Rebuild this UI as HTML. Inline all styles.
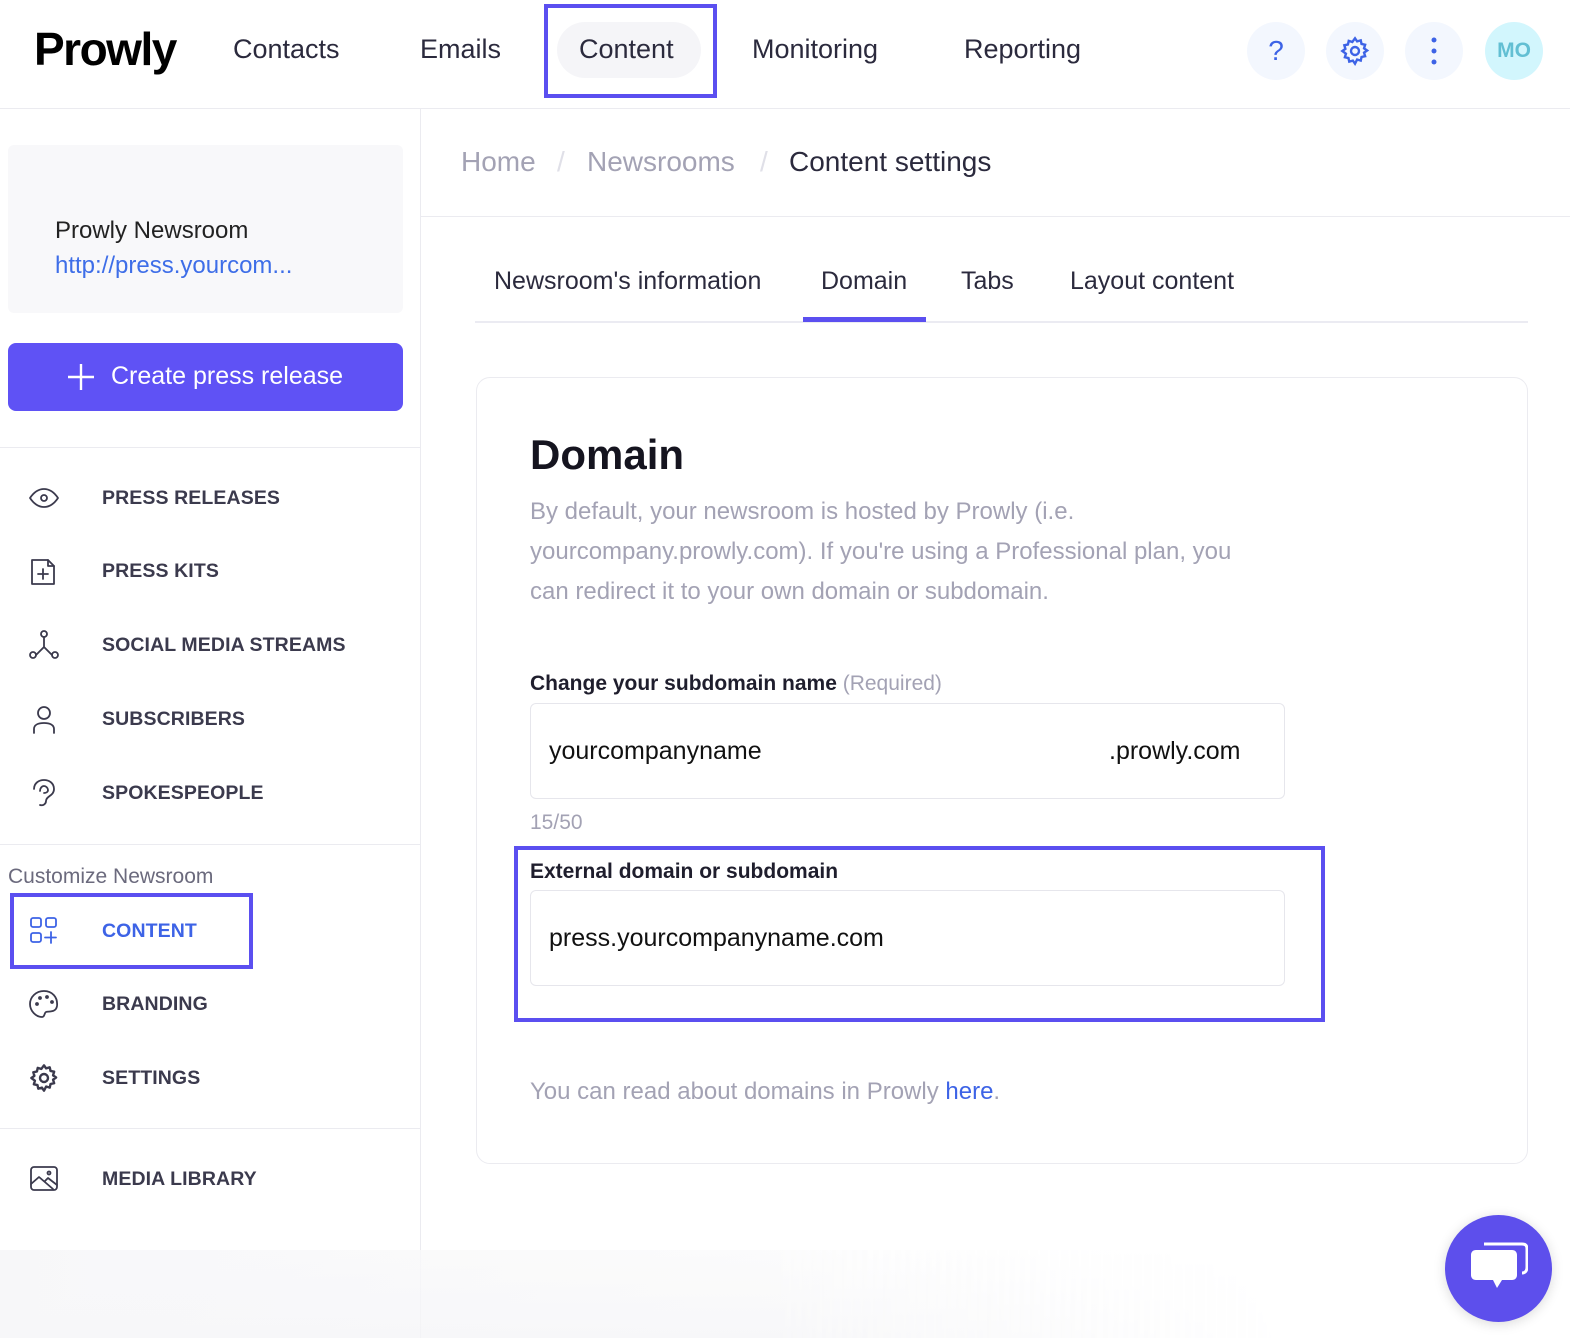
<!DOCTYPE html>
<html><head><meta charset="utf-8"><style>
*{box-sizing:border-box;margin:0;padding:0}
body{width:1570px;height:1338px;position:relative;background:#fff;font-family:"Liberation Sans",sans-serif;color:#2b2a3d;overflow:hidden}
.a{position:absolute;white-space:nowrap}
.nav{font-size:27px;color:#2b2a3d;top:34px}
.circ{position:absolute;top:22px;width:58px;height:58px;border-radius:50%;background:#f3f7fe;display:flex;align-items:center;justify-content:center}
.side{font-size:19.5px;font-weight:bold;color:#3b3a4d;left:102px;letter-spacing:.1px}
.ic{position:absolute;left:28px;width:32px;height:32px}
.ic *{fill:none;stroke:#3b3a4d;stroke-width:1.8;stroke-linecap:round;stroke-linejoin:round}
.hr{position:absolute;left:0;width:420px;height:1px;background:#ebebf0}
</style></head><body>
<div class="a" style="left:34px;top:22px;font-size:46px;font-weight:bold;color:#000;letter-spacing:-1.5px">Prowly</div>
<div class="a nav" style="left:233px">Contacts</div>
<div class="a nav" style="left:420px">Emails</div>
<div class="a" style="left:557px;top:22px;width:144px;height:56px;border-radius:28px;background:#f5f5f8"></div>
<div class="a nav" style="left:579px">Content</div>
<div class="a" style="left:544px;top:4px;width:173px;height:94px;border:4px solid #5b4ff0"></div>
<div class="a nav" style="left:752px">Monitoring</div>
<div class="a nav" style="left:964px">Reporting</div>
<div class="circ" style="left:1247px"><span style="color:#3d63e6;font-size:28px">?</span></div>
<div class="circ" style="left:1326px"><svg width="32" height="32" viewBox="0 0 24 24" fill="none" stroke="#3d63e6" stroke-width="1.8"><circle cx="12" cy="12" r="3"/><path d="M12 2.5l1.6 2.3 2.7-.8.6 2.7 2.7.6-.8 2.7 2.3 1.6-2.3 1.6.8 2.7-2.7.6-.6 2.7-2.7-.8L12 21.5l-1.6-2.3-2.7.8-.6-2.7-2.7-.6.8-2.7L2.5 12l2.3-1.6-.8-2.7 2.7-.6.6-2.7 2.7.8z"/></svg></div>
<div class="circ" style="left:1405px"><svg width="10" height="32" viewBox="0 0 10 32"><circle cx="5" cy="5" r="2.5" fill="#3d63e6"/><circle cx="5" cy="16" r="2.5" fill="#3d63e6"/><circle cx="5" cy="27" r="2.5" fill="#3d63e6"/></svg></div>
<div class="circ" style="left:1485px;background:#d2f6fd"><span style="color:#62bfd3;font-size:21px;font-weight:bold">MO</span></div>
<div class="a" style="left:0;top:108px;width:1570px;height:1px;background:#ebebf0"></div>
<div class="a" style="left:420px;top:108px;width:1px;height:1230px;background:#ebebf0"></div>
<div class="a" style="left:0;top:1250px;width:1300px;height:88px;background:linear-gradient(180deg,rgba(246,246,248,0),rgba(246,246,248,1)), linear-gradient(90deg,#f6f6f8,#fff);opacity:.8;-webkit-mask-image:linear-gradient(90deg,#000 60%,transparent)"></div>

<div class="a" style="left:8px;top:145px;width:395px;height:168px;border-radius:6px;background:#f8f8fa"></div>
<div class="a" style="left:55px;top:217px;font-size:24px;color:#222">Prowly Newsroom</div>
<div class="a" style="left:55px;top:252px;font-size:24px;color:#3e6ee8">http://press.yourcom...</div>
<div class="a" style="left:8px;top:343px;width:395px;height:68px;border-radius:8px;background:#5f52f5"></div>
<svg class="a" style="left:67px;top:363px" width="28" height="28" viewBox="0 0 28 28"><path d="M14 1v26M1 14h26" stroke="#fff" stroke-width="2.4"/></svg>
<div class="a" style="left:111px;top:362px;font-size:25px;color:#fff">Create press release</div>
<div class="hr" style="top:447px"></div>

<svg class="ic" style="top:482px" viewBox="0 0 32 32"><path d="M2 16c4-6 9-9 14-9s10 3 14 9c-4 6-9 9-14 9S6 22 2 16z"/><circle cx="16" cy="16" r="3"/></svg>
<div class="a side" style="top:487px">PRESS RELEASES</div>
<svg class="ic" style="top:556px" viewBox="0 0 32 32"><path d="M4 4h16l6 6v18H4z"/><path d="M20 4v6h6M15 13v10M10 18h10"/></svg>
<div class="a side" style="top:560px">PRESS KITS</div>
<svg class="ic" style="top:629px" viewBox="0 0 32 32"><circle cx="16" cy="5" r="3"/><circle cx="5" cy="26" r="3"/><circle cx="27" cy="26" r="3"/><path d="M16 8v10M8 26l8-8 8 8"/></svg>
<div class="a side" style="top:634px">SOCIAL MEDIA STREAMS</div>
<svg class="ic" style="top:703px" viewBox="0 0 32 32"><circle cx="16" cy="10" r="6"/><path d="M6 30v-4c0-4 4-6 10-6s10 2 10 6v4"/></svg>
<div class="a side" style="top:708px">SUBSCRIBERS</div>
<svg class="ic" style="top:777px" viewBox="0 0 32 32"><path d="M6 12c0-6 5-9 10-9s10 3 10 9c0 7-8 7-8 12 0 3-3 5-6 4M12 14c0-3 2-5 4-5s4 2 4 4-2 3-4 3"/></svg>
<div class="a side" style="top:782px">SPOKESPEOPLE</div>
<div class="hr" style="top:844px"></div>
<div class="a" style="left:8px;top:865px;font-size:21px;color:#6b6a7d">Customize Newsroom</div>
<div class="a" style="left:10px;top:893px;width:243px;height:76px;border:4px solid #5b4ff0"></div>
<svg class="ic" style="top:915px" viewBox="0 0 32 32"><rect x="3" y="3" width="10" height="9" rx="2" style="stroke:#3d63e6"/><rect x="18" y="3" width="10" height="9" rx="2" style="stroke:#3d63e6"/><rect x="3" y="18" width="10" height="9" rx="2" style="stroke:#3d63e6"/><path d="M23 17v11M17 22.5h11" style="stroke:#3d63e6"/></svg>
<div class="a side" style="top:920px;color:#3d63e6">CONTENT</div>
<svg class="ic" style="top:988px" viewBox="0 0 32 32"><path d="M16 3C8 3 2 9 2 16s6 13 12 13c3 0 2-4 4-5s10 1 11-6C30 9 24 3 16 3z"/><circle cx="9" cy="16" r="1"/><circle cx="12" cy="10" r="1"/><circle cx="19" cy="9" r="1"/><circle cx="24" cy="14" r="1"/></svg>
<div class="a side" style="top:993px">BRANDING</div>
<svg class="ic" style="top:1062px" viewBox="0 0 24 24"><circle cx="12" cy="12" r="3"/><path d="M12 2.5l1.6 2.3 2.7-.8.6 2.7 2.7.6-.8 2.7 2.3 1.6-2.3 1.6.8 2.7-2.7.6-.6 2.7-2.7-.8L12 21.5l-1.6-2.3-2.7.8-.6-2.7-2.7-.6.8-2.7L2.5 12l2.3-1.6-.8-2.7 2.7-.6.6-2.7 2.7.8z"/></svg>
<div class="a side" style="top:1067px">SETTINGS</div>
<div class="hr" style="top:1128px"></div>
<svg class="ic" style="top:1163px" viewBox="0 0 32 32"><rect x="3" y="4" width="26" height="23" rx="3"/><path d="M3 21l8-7 14 12M17 18l3-3 9 7"/><circle cx="21" cy="10" r="1.5"/></svg>
<div class="a side" style="top:1168px">MEDIA LIBRARY</div>

<div class="a" style="left:461px;top:146px;font-size:28px;color:#a3a2b4">Home</div>
<div class="a" style="left:557px;top:146px;font-size:28px;color:#e0e0e8">/</div>
<div class="a" style="left:587px;top:146px;font-size:28px;color:#a3a2b4">Newsrooms</div>
<div class="a" style="left:760px;top:146px;font-size:28px;color:#e0e0e8">/</div>
<div class="a" style="left:789px;top:146px;font-size:28px;color:#2b2a3d">Content settings</div>
<div class="a" style="left:421px;top:216px;width:1149px;height:1px;background:#ebebf0"></div>

<div class="a" style="left:494px;top:267px;font-size:25px">Newsroom's information</div>
<div class="a" style="left:821px;top:267px;font-size:25px">Domain</div>
<div class="a" style="left:961px;top:267px;font-size:25px">Tabs</div>
<div class="a" style="left:1070px;top:267px;font-size:25px">Layout content</div>
<div class="a" style="left:475px;top:321px;width:1053px;height:2px;background:#ebebf2"></div>
<div class="a" style="left:803px;top:317px;width:123px;height:5px;background:#5b4ff0"></div>

<div class="a" style="left:476px;top:377px;width:1052px;height:787px;border:1px solid #ebebf0;border-radius:14px"></div>
<div class="a" style="left:530px;top:431px;font-size:42px;font-weight:bold;color:#15141f">Domain</div>
<div class="a" style="left:530px;top:492px;font-size:24px;line-height:40px;color:#a3a2b4;white-space:normal;width:735px">By default, your newsroom is hosted by Prowly (i.e. yourcompany.prowly.com). If you're using a Professional plan, you can redirect it to your own domain or subdomain.</div>
<div class="a" style="left:530px;top:672px;font-size:21px;font-weight:bold;color:#1f1e2d">Change your subdomain name <span style="font-weight:normal;color:#a3a2b4">(Required)</span></div>
<div class="a" style="left:530px;top:703px;width:755px;height:96px;border:1px solid #e6e6ec;border-radius:6px"></div>
<div class="a" style="left:549px;top:737px;font-size:25px;color:#111">yourcompanyname</div>
<div class="a" style="left:1109px;top:737px;font-size:25px;color:#111">.prowly.com</div>
<div class="a" style="left:530px;top:811px;font-size:21px;color:#a3a2b4">15/50</div>
<div class="a" style="left:514px;top:846px;width:811px;height:176px;border:4px solid #5b4ff0"></div>
<div class="a" style="left:530px;top:860px;font-size:21px;font-weight:bold;color:#1f1e2d">External domain or subdomain</div>
<div class="a" style="left:530px;top:890px;width:755px;height:96px;border:1px solid #e6e6ec;border-radius:6px"></div>
<div class="a" style="left:549px;top:924px;font-size:25px;color:#111">press.yourcompanyname.com</div>
<div class="a" style="left:530px;top:1078px;font-size:24px;color:#a3a2b4">You can read about domains in Prowly <span style="color:#3d63e6">here</span>.</div>

<div class="a" style="left:1445px;top:1215px;width:107px;height:107px;border-radius:50%;background:#5d4fec;box-shadow:0 2px 12px rgba(0,0,0,.15)"></div>
<svg class="a" style="left:1470px;top:1240px" width="58" height="58" viewBox="0 0 58 58"><path d="M14 4h38c4 0 5 2 5 5v18c0 4-2 6-5 6" fill="none" stroke="#fff" stroke-width="3"/><path d="M6 10h36c3 0 5 2 5 5v20c0 3-2 5-5 5H32l-5 8-4-8H6c-3 0-5-2-5-5V15c0-3 2-5 5-5z" fill="#fff"/></svg>
</body></html>
